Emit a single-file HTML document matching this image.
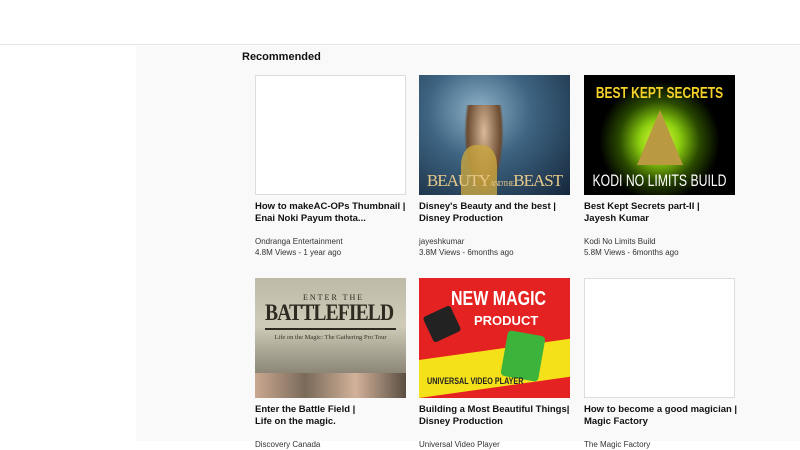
<!DOCTYPE html>
<html><head><meta charset="utf-8"><style>
*{margin:0;padding:0;box-sizing:border-box}
body{width:800px;height:450px;background:#fff;font-family:"Liberation Sans",sans-serif;position:relative;overflow:hidden}
.hdr{position:absolute;left:0;top:0;width:800px;height:45px;background:#fff;border-bottom:1px solid #e5e5e5}
.main{position:absolute;left:136px;top:46px;width:664px;height:395px;background:#f9f9f9}
.rec{position:absolute;left:242px;top:51px;font-size:11px;font-weight:bold;color:#111}
.card{position:absolute;width:151px}
.th{width:151px;height:120px;position:relative;overflow:hidden}
.th div{white-space:nowrap}
.blank{background:#fff;border:1px solid #ddd}
.t{position:absolute;top:126px;left:0;font-size:9.5px;font-weight:bold;color:#111;line-height:11.5px;white-space:nowrap}
.c{position:absolute;top:161px;left:0;font-size:8px;color:#333;line-height:11px;white-space:nowrap}
</style></head><body>
<div class="hdr"></div>
<div class="main"></div>
<div class="rec">Recommended</div>

<div class="card" style="left:255px;top:75px">
 <div class="th blank"></div>
 <div class="t">How to makeAC-OPs Thumbnail |<br>Enai Noki Payum thota...</div>
 <div class="c">Ondranga Entertainment<br>4.8M Views - 1 year ago</div>
</div>

<div class="card" style="left:419px;top:75px">
 <div class="th" style="background:radial-gradient(ellipse at 40% 30%,#8fb3c8 0%,#3e6583 40%,#15263a 100%)">
  <div style="position:absolute;left:45px;top:30px;width:40px;height:90px;background:radial-gradient(ellipse at 50% 30%,#d8b896,#6a4a30 60%,transparent 70%)"></div>
  <div style="position:absolute;left:42px;top:70px;width:36px;height:50px;background:#c9a640;border-radius:40% 40% 0 0;opacity:.8"></div>
  <div style="position:absolute;left:0;top:96px;width:151px;text-align:center;font-family:'Liberation Serif',serif;color:#e8c98a;font-size:17px;letter-spacing:-1px">BEAUTY<span style="font-size:7px">AND THE</span>BEAST</div>
 </div>
 <div class="t">Disney's Beauty and the best |<br>Disney Production</div>
 <div class="c">jayeshkumar<br>3.8M Views - 6months ago</div>
</div>

<div class="card" style="left:584px;top:75px">
 <div class="th" style="background:radial-gradient(circle at 50% 55%,#e8ff40 0%,#8ccf10 20%,#2a4a00 40%,#000 60%)">
  <div style="position:absolute;left:-20px;top:10px;width:191px;text-align:center;color:#f4d22a;font-weight:bold;font-size:16px;transform:scaleX(.75)">BEST KEPT SECRETS</div>
  <div style="position:absolute;left:53px;top:35px;width:0;height:0;border-left:23px solid transparent;border-right:23px solid transparent;border-bottom:55px solid #b99a40"></div>
  <div style="position:absolute;left:-20px;top:96px;width:191px;text-align:center;color:#fff;font-size:17px;transform:scaleX(.72)">KODI NO LIMITS BUILD</div>
 </div>
 <div class="t">Best Kept Secrets part-II |<br>Jayesh Kumar</div>
 <div class="c">Kodi No Limits Build<br>5.8M Views - 6months ago</div>
</div>

<div class="card" style="left:255px;top:278px">
 <div class="th" style="background:linear-gradient(180deg,#bdbaa8 0%,#cfcbb8 40%,#8a8575 80%,#5a554a 100%)">
  <div style="position:absolute;top:15px;color:#2e2a22;font-family:'Liberation Serif',serif;font-size:8px;letter-spacing:2px;left:48px">ENTER THE</div>
  <div style="position:absolute;left:10px;top:22px;color:#2e2a22;font-family:'Liberation Serif',serif;font-size:23px;font-weight:bold;letter-spacing:-1px;transform:scaleX(.85);transform-origin:left">BATTLEFIELD</div>
  <div style="position:absolute;left:10px;top:50px;width:131px;height:2px;background:#2e2a22"></div>
  <div style="position:absolute;left:0;top:56px;width:151px;text-align:center;color:#3a3528;font-family:'Liberation Serif',serif;font-size:6.5px">Life on the Magic: The Gathering Pro Tour</div>
  <div style="position:absolute;left:0;top:95px;width:151px;height:25px;background:linear-gradient(90deg,#caa890,#7a6a5a,#d2b29a,#5a4e42)"></div>
 </div>
 <div class="t">Enter the Battle Field |<br>Life on the magic.</div>
 <div class="c">Discovery Canada</div>
</div>

<div class="card" style="left:419px;top:278px">
 <div class="th" style="background:#e52222">
  <div style="position:absolute;left:0;top:82px;width:151px;height:38px;background:#f5e11a;transform:skewY(-8deg);transform-origin:left bottom"></div>
  <div style="position:absolute;left:32px;top:10px;color:#fff;font-weight:bold;font-size:20px;transform:scaleX(.8);transform-origin:left">NEW MAGIC</div>
  <div style="position:absolute;left:55px;top:35px;color:#fff;font-weight:bold;font-size:13px">PRODUCT</div>
  <div style="position:absolute;left:8px;top:32px;width:30px;height:28px;background:#222;transform:rotate(-25deg);border-radius:3px"></div>
  <div style="position:absolute;left:85px;top:55px;width:38px;height:46px;background:#3cb43c;transform:rotate(10deg);border-radius:4px"></div>
  <div style="position:absolute;left:8px;top:98px;color:#222;font-weight:bold;font-size:9px;transform:scaleX(.8);transform-origin:left">UNIVERSAL VIDEO PLAYER</div>
 </div>
 <div class="t">Building a Most Beautiful Things|<br>Disney Production</div>
 <div class="c">Universal Video Player</div>
</div>

<div class="card" style="left:584px;top:278px">
 <div class="th blank"></div>
 <div class="t">How to become a good magician |<br>Magic Factory</div>
 <div class="c">The Magic Factory</div>
</div>
</body></html>
